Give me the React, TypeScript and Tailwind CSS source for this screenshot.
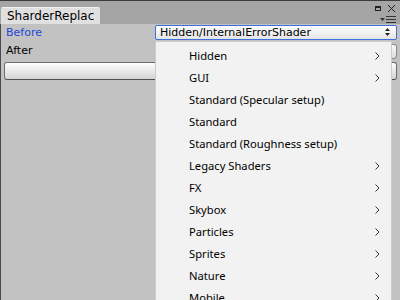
import React from "react";

interface MenuItem {
  label: string;
  sub: boolean;
}

const items: MenuItem[] = [
  { label: "Hidden", sub: true },
  { label: "GUI", sub: true },
  { label: "Standard (Specular setup)", sub: false },
  { label: "Standard", sub: false },
  { label: "Standard (Roughness setup)", sub: false },
  { label: "Legacy Shaders", sub: true },
  { label: "FX", sub: true },
  { label: "Skybox", sub: true },
  { label: "Particles", sub: true },
  { label: "Sprites", sub: true },
  { label: "Nature", sub: true },
  { label: "Mobile", sub: true },
];

const Chevron = () => (
  <svg width="5" height="8" viewBox="0 0 5 8" className="shrink-0">
    <polyline points="0.5,0.5 4,4 0.5,7.5" fill="none" stroke="#333" strokeWidth="1" />
  </svg>
);

const App: React.FC = () => {
  return (
    <div className="w-[400px] h-[300px] relative overflow-hidden bg-[#c2c2c2] font-['DejaVu_Sans',sans-serif] text-[11px] text-black">
      {/* tab strip */}
      <div className="h-[24px] bg-[#a5a5a5] relative flex items-end border-t border-[#3c3c3c]">
        <div className="ml-[1px] w-[99px] h-[17px] bg-[#e0e0e0] rounded-t-[2px] border-t border-[#f2f2f2] pl-[6px] pr-[6px]">
          <div className="overflow-hidden whitespace-nowrap text-[12px] leading-[16px]">SharderReplace</div>
        </div>
        <div className="ml-auto mr-[4px] mb-[1px] flex flex-col items-end gap-[3px]">
          <div className="flex items-center gap-[6px]">
            <div className="w-[6px] h-[5px] border border-t-2 border-[#222]" />
            <svg width="9" height="9" viewBox="0 0 9 9">
              <path d="M1 1 L8 8 M8 1 L1 8" stroke="#222" strokeWidth="1" />
            </svg>
          </div>
          <div className="flex items-center gap-[1px]">
            <svg width="5" height="3" viewBox="0 0 5 3">
              <path d="M0 0 H5 L2.5 3 Z" fill="#333" />
            </svg>
            <svg width="10" height="7" viewBox="0 0 10 7">
              <path d="M0 0.5 H10 M0 3.5 H10 M0 6.5 H10" stroke="#333" strokeWidth="1" />
            </svg>
          </div>
        </div>
      </div>

      {/* inspector body */}
      <div className="flex flex-col h-[276px] border-l border-[#4a4a4a]">
        <div className="h-[18px] flex items-center">
          <span className="w-[154px] pl-[5px] text-[#1f47d8]">Before</span>
          <div className="mt-[-2px] w-[242px] h-[15px] rounded-[2px] border border-[#3f6fe0] bg-gradient-to-b from-[#ffffff] to-[#e4e4e4] flex items-center pl-[4px] pr-[6px] leading-none">
            <span className="flex-1">Hidden/InternalErrorShader</span>
            <svg width="5" height="8" viewBox="0 0 5 8">
              <path d="M0 3 L2.5 0 L5 3 Z M0 5 L2.5 8 L5 5 Z" fill="#222" />
            </svg>
          </div>
        </div>
        <div className="h-[18px] flex items-center">
          <span className="w-[154px] pl-[5px]">After</span>
          <div className="w-[242px] h-[15px] rounded-[3px] border border-[#8a8a8a] bg-gradient-to-b from-[#fafafa] to-[#dcdcdc]" />
        </div>
        <div className="mt-[2px] ml-[3px] w-[393px] h-[18px] rounded-[3px] border border-[#6e6e6e] border-b-[#4f4f4f] bg-gradient-to-b from-[#fefefe] to-[#d4d4d4]" />
      </div>

      {/* popup menu */}
      <div className="absolute left-[155px] top-[41px] w-[237px] h-[290px] bg-[#f2f2f2] border border-[#cccccc] pt-[3px] font-['Noto_Sans',sans-serif] text-[11.2px] text-black">
        {items.map((item) => (
          <div key={item.label} className="h-[22px] flex items-center pl-[33px] pr-[11px]">
            <span className="flex-1 whitespace-nowrap">{item.label}</span>
            {item.sub && <Chevron />}
          </div>
        ))}
      </div>
    </div>
  );
};

export default App;
